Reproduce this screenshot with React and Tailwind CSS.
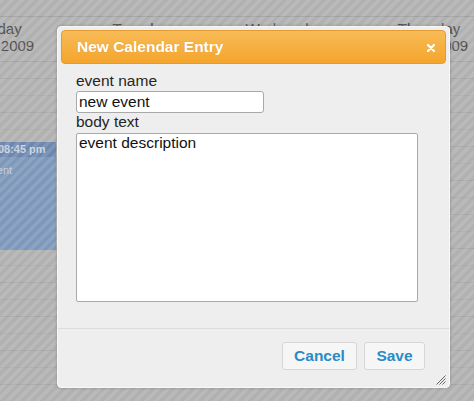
import React from 'react'

const days = [
  { name: 'Monday', date: 'Jun 1, 2009', w: 'w-[146px]' },
  { name: 'Tuesday', date: 'Jun 2, 2009', w: 'w-[146px]' },
  { name: 'Wednesday', date: 'Jun 3, 2009', w: 'w-[142px]' },
  { name: 'Thursday', date: 'Jun 4, 2009', w: 'w-[146px]' },
]

const rows = Array.from({ length: 20 }, (_, i) => i)

const CalendarBehind = () => (
  <div className="flex flex-col bg-[#b1b1b1]">
    <div className="h-[17px] border-b border-[#a0a0a0]" />
    {/* Day headers */}
    <div className="flex h-[45px] -ml-[78px] border-b border-[#a3a3a3]">
      {days.map((d) => (
        <div key={d.name} className={`${d.w} shrink-0 pt-[3px] text-center text-[15px] leading-[17px] text-[#4e4e4e]`}>
          <div>{d.name}</div>
          <div>{d.date}</div>
        </div>
      ))}
    </div>
    {/* Time rows */}
    <div className="relative">
      {rows.map((r) => (
        <div
          key={r}
          className={`h-[17px] border-b ${r % 2 === 0 ? 'border-[#a6a6a6]' : 'border-[#aaaaaa]'}`}
        />
      ))}
      {/* Event block in the Monday column */}
      <div className="absolute left-[-74px] top-[80px] w-[130px] h-[108px] bg-[#7e98bb]">
        <div className="h-[15px] bg-[#6c88b0] pl-[34px] text-[11px] leading-[15px] font-bold text-[#c9d3df] whitespace-nowrap">
          08:00 - 08:45 pm
        </div>
        <div className="pl-[36px] pt-[6px] text-[11px] leading-[14px] text-[#c3cddb] whitespace-nowrap">new event</div>
      </div>
    </div>
  </div>
)

const Dialog = () => (
  <div className="absolute left-[57px] top-[26px] w-[393px] h-[362px] flex flex-col rounded-[4px] border border-[#f8f8f8] bg-[#eeeeee] shadow-[0_0_3px_rgba(0,0,0,0.25)]">
    {/* Title bar */}
    <div className="mx-[3px] mt-[3px] h-[34px] flex items-center justify-between rounded-[4px] border border-[#e39a30] bg-[linear-gradient(#f8bb56,#f4a52d)] pl-[15px] pr-[10px]">
      <span className="text-[15.5px] font-bold text-white [text-shadow:0_0_1px_rgba(180,100,0,0.4)]">New Calendar Entry</span>
      <svg width="8" height="8" viewBox="0 0 8 8" className="mt-[1px]">
        <path d="M1 1 L7 7 M7 1 L1 7" stroke="#ffffff" strokeWidth="2.2" strokeLinecap="round" />
      </svg>
    </div>

    {/* Form */}
    <div className="flex flex-col pl-[18px] pt-[8px] text-[15.5px] text-[#252525]">
      <label className="leading-[18px]">event name</label>
      <input
        readOnly
        value="new event"
        className="mt-[1px] w-[188px] h-[22px] rounded-[3px] border border-[#a9a9a9] bg-white pl-[2px] text-[15.5px] leading-[20px] text-[#111] outline-none"
      />
      <label className="leading-[18px]">body text</label>
      <textarea
        readOnly
        value="event description"
        className="mt-[2px] w-[342px] h-[169px] resize-none rounded-[2px] border border-[#a9a9a9] bg-white pl-[2px] pt-0 text-[15.5px] leading-[17px] text-[#111] outline-none"
      />
    </div>

    {/* Buttons */}
    <div className="mt-[26px] flex justify-end gap-[7px] border-t border-[#dcdcdc] pr-[24px] pt-[13px]">
      <button className="w-[75px] h-[28px] rounded-[3px] border border-[#d6d6d6] bg-[#f6f6f6] text-[15.5px] font-bold text-[#2a8bc6]">
        Cancel
      </button>
      <button className="w-[61px] h-[28px] rounded-[3px] border border-[#d6d6d6] bg-[#f6f6f6] text-[15.5px] font-bold text-[#2a8bc6]">
        Save
      </button>
    </div>

    {/* Resize grip */}
    <svg width="10" height="10" viewBox="0 0 10 10" className="absolute right-[3px] bottom-[2px]">
      <path d="M9.5 0.5 L0.5 9.5 M9.5 3.5 L3.5 9.5 M9.5 6.5 L6.5 9.5" stroke="#666666" strokeWidth="1" />
    </svg>
  </div>
)

export default function App() {
  return (
    <div className="relative w-[474px] h-[401px] overflow-hidden font-['Liberation_Sans',Arial,sans-serif]">
      <CalendarBehind />
      {/* striped modal overlay */}
      <div className="absolute inset-0 bg-[repeating-linear-gradient(135deg,rgba(255,255,255,0.11)_0px,rgba(255,255,255,0.11)_3.5px,transparent_3.5px,transparent_7px)]" />
      <Dialog />
    </div>
  )
}
